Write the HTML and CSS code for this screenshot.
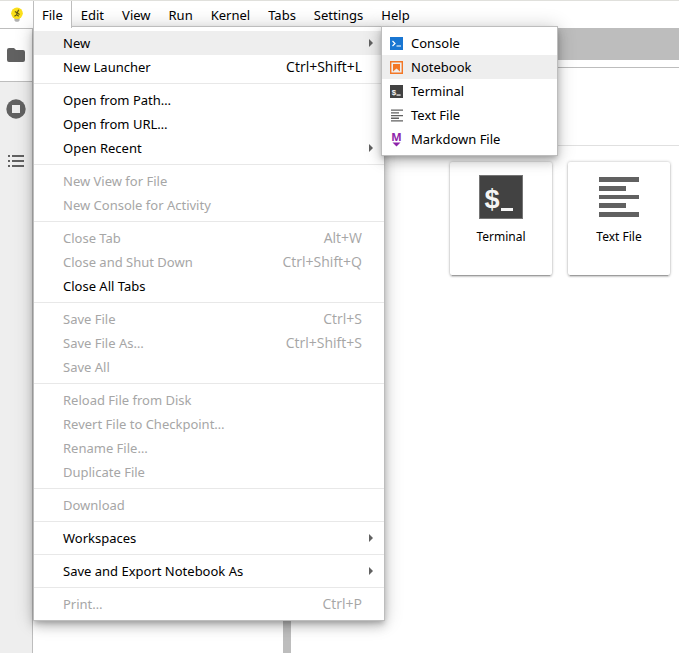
FILE: index.html
```html
<!DOCTYPE html>
<html lang="en">
<head>
    <meta charset="UTF-8">
    <meta name="viewport" content="width=device-width, initial-scale=1.0">
    <title>JupyterLab</title>
    <link rel="stylesheet" href="styles.css">
</head>
<body>
    <header class="top-panel">
        <div class="logo">
            <svg width="12" height="16" viewBox="0 0 14 18">
                <path d="M4 12h6v3.500L8.500 17h-3L4 15.500z" fill="#b0b0b0"/>
                <circle cx="7" cy="7" r="6.800" fill="#fbdf1b"/>
                <path d="M9 2.800L7.200 6.500L4.500 5M7.200 6.500L10 8.500M7 6.500L6.500 9L4 10.500M6.500 8.500L9 10.500" fill="none" stroke="#5d5415" stroke-width="1.300"/>
            </svg>
        </div>
        <nav>
            <ul class="menu-bar">
                <li>
                    <button class="menu-title active" type="button">File</button>
                    <ul class="menu file-menu">
                        <li>
                            <button class="item hover" type="button">New<span class="arrow"></span></button>
                            <ul class="menu sub-menu">
                                <li><button class="item" type="button">
                                    <svg width="13" height="13" viewBox="0 0 13 13"><path fill="#1976d2" d="M0 0h13v13H0z"/><path d="M2.500 4L5 6.500L2.500 9M6.500 9H11" fill="none" stroke="#fff" stroke-width="1.200"/></svg>
                                    Console</button></li>
                                <li><button class="item hover" type="button">
                                    <svg width="13" height="13" viewBox="0 0 13 13"><path d="M.7.7h11.600v11.600H.7z" fill="none" stroke="#f37726" stroke-width="1.400"/><path fill="#f37726" d="M3 3h7v7.500L6.500 7.500L3 10.500z"/></svg>
                                    Notebook</button></li>
                                <li><button class="item" type="button">
                                    <svg width="13" height="13" viewBox="0 0 44 44"><path fill="#424242" d="M0 0h44v44H0z"/><text x="5" y="33" class="terminal-sign">$</text><path fill="#fff" d="M22 32h14v4H22z"/></svg>
                                    Terminal</button></li>
                                <li><button class="item" type="button">
                                    <svg width="13" height="13" viewBox="0 0 13 13"><path fill="#616161" d="M1 .5h12v1.300H1zM1 3.200h8v1.300H1zM1 5.900h12v1.300H1zM1 8.600h8v1.300H1zM1 11.300h12v1.300H1z"/></svg>
                                    Text File</button></li>
                                <li><button class="item" type="button">
                                    <svg width="13" height="17" viewBox="0 0 13 17"><text x="6.500" y="10" text-anchor="middle" class="markdown-sign">M</text><path fill="#8e24aa" d="M2.500 11.500h8l-4 4z"/></svg>
                                    Markdown File</button></li>
                            </ul>
                        </li>
                        <li><button class="item" type="button">New Launcher<kbd>Ctrl+Shift+L</kbd></button></li>
                        <li class="separator"></li>
                        <li><button class="item" type="button">Open from Path…</button></li>
                        <li><button class="item" type="button">Open from URL…</button></li>
                        <li><button class="item" type="button">Open Recent<span class="arrow"></span></button></li>
                        <li class="separator"></li>
                        <li><button class="item" type="button" disabled>New View for File</button></li>
                        <li><button class="item" type="button" disabled>New Console for Activity</button></li>
                        <li class="separator"></li>
                        <li><button class="item" type="button" disabled>Close Tab<kbd>Alt+W</kbd></button></li>
                        <li><button class="item" type="button" disabled>Close and Shut Down<kbd>Ctrl+Shift+Q</kbd></button></li>
                        <li><button class="item" type="button">Close All Tabs</button></li>
                        <li class="separator"></li>
                        <li><button class="item" type="button" disabled>Save File<kbd>Ctrl+S</kbd></button></li>
                        <li><button class="item" type="button" disabled>Save File As…<kbd>Ctrl+Shift+S</kbd></button></li>
                        <li><button class="item" type="button" disabled>Save All</button></li>
                        <li class="separator"></li>
                        <li><button class="item" type="button" disabled>Reload File from Disk</button></li>
                        <li><button class="item" type="button" disabled>Revert File to Checkpoint…</button></li>
                        <li><button class="item" type="button" disabled>Rename File…</button></li>
                        <li><button class="item" type="button" disabled>Duplicate File</button></li>
                        <li class="separator"></li>
                        <li><button class="item" type="button" disabled>Download</button></li>
                        <li class="separator"></li>
                        <li><button class="item" type="button">Workspaces<span class="arrow"></span></button></li>
                        <li class="separator"></li>
                        <li><button class="item" type="button">Save and Export Notebook As<span class="arrow"></span></button></li>
                        <li class="separator"></li>
                        <li><button class="item" type="button" disabled>Print…<kbd>Ctrl+P</kbd></button></li>
                    </ul>
                </li>
                <li><button class="menu-title" type="button">Edit</button></li>
                <li><button class="menu-title" type="button">View</button></li>
                <li><button class="menu-title" type="button">Run</button></li>
                <li><button class="menu-title" type="button">Kernel</button></li>
                <li><button class="menu-title" type="button">Tabs</button></li>
                <li><button class="menu-title" type="button">Settings</button></li>
                <li><button class="menu-title" type="button">Help</button></li>
            </ul>
        </nav>
    </header>

    <div class="workspace">
        <aside class="side-bar">
            <button class="side-tab current" type="button" aria-label="File Browser">
                <svg width="18" height="14" viewBox="0 0 18 14"><path fill="#616161" d="M2 0h5l2 2h7q2 0 2 2v8q0 2-2 2H2q-2 0-2-2V2q0-2 2-2z"/></svg>
            </button>
            <button class="side-tab" type="button" aria-label="Running Terminals and Kernels">
                <svg width="20" height="20" viewBox="0 0 20 20"><circle cx="10" cy="10" r="9.700" fill="#616161"/><path fill="#eee" d="M6 6h8v8H6z"/></svg>
            </button>
            <button class="side-tab" type="button" aria-label="Table of Contents">
                <svg width="16" height="13" viewBox="0 0 16 13"><path fill="#616161" d="M0 0h2v2H0zM4 0h12v2H4zM0 5h2v2H0zM4 5h12v2H4zM0 10h2v2H0zM4 10h12v2H4z"/></svg>
            </button>
        </aside>
        <section class="left-panel"></section>
        <main class="dock">
            <div class="tab-bar"></div>
            <div class="launcher">
                <div class="launcher-head"></div>
                <div class="cards">
                    <button class="card" type="button">
                        <svg width="44" height="44" viewBox="0 0 44 44"><path fill="#757575" d="M0 0h44v44H0z"/><path fill="#424242" d="M1 1h42v42H1z"/><text x="5" y="33" class="terminal-sign">$</text><path fill="#f5f5f5" d="M22 33h12v3H22z"/></svg>
                        Terminal
                    </button>
                    <button class="card" type="button">
                        <svg width="44" height="44" viewBox="0 0 44 44"><path fill="#616161" d="M2 2h40v5H2zM2 11h27v5H2zM2 20h40v4H2zM2 28h27v5H2zM2 37h40v5H2z"/></svg>
                        Text File
                    </button>
                </div>
            </div>
        </main>
    </div>
</body>
</html>
```

FILE: styles.css
```css
* {
    margin: 0;
    padding: 0;
    box-sizing: border-box;
}

body {
    display: flex;
    flex-direction: column;
    height: 100vh;
    overflow: hidden;
    background: #fff;
    color: #000;
    font-family: 'Noto Sans', 'Open Sans', sans-serif;
    font-size: 13px;
}

ul {
    list-style: none;
}

button {
    border: none;
    background: none;
    color: inherit;
    font: inherit;
}

svg {
    display: block;
    flex: none;
    overflow: visible;
}

/* Top panel */
.top-panel {
    display: flex;
    height: 28px;
    border-top: 1px solid #e0e0dc;
}

.logo {
    display: flex;
    align-items: center;
    justify-content: center;
    width: 33px;
}

.menu-bar {
    display: flex;
}

.menu-bar > li {
    position: relative;
}

.menu-title {
    height: 27px;
    padding: 0 8px;
    border: 1px solid transparent;
    border-width: 0 1px;
}

.menu-title.active {
    position: relative;
    z-index: 3;
    background: #fff;
    border-color: #bdbdbd;
}

/* Menus */
.menu {
    position: absolute;
    z-index: 2;
    padding: 4px 0;
    background: #fff;
    border: 1px solid #bdbdbd;
    box-shadow: 0 3px 5px -1px rgba(0, 0, 0, 0.2),
                0 6px 10px 0 rgba(0, 0, 0, 0.14),
                0 1px 18px 0 rgba(0, 0, 0, 0.2);
}

.file-menu {
    top: 25px;
    left: 0;
    width: 352px;
}

.sub-menu {
    top: -1px;
    left: 347px;
    width: 177px;
}

.item {
    display: flex;
    align-items: center;
    width: 100%;
    height: 24px;
    padding: 0 11px 0 29px;
    text-align: left;
    white-space: nowrap;
}

.item.hover {
    background: #eee;
}

.item:disabled {
    color: #a6a6a6;
}

.item kbd {
    margin-left: auto;
    padding-right: 11px;
    font: 14px/18px 'Open Sans', sans-serif;
}

.arrow {
    margin-left: auto;
    border: 4px solid transparent;
    border-left-color: #616161;
    border-right-width: 0;
}

.sub-menu .item {
    gap: 8px;
    padding: 0 8px;
}

.separator {
    height: 9px;
    padding-top: 4px;
}

.separator::before {
    content: '';
    display: block;
    height: 1px;
    background: #e8e8e8;
}

.terminal-sign {
    fill: #f5f5f5;
    font: bold 27px 'Liberation Mono', monospace;
}

.markdown-sign {
    fill: #8e24aa;
    font: bold 11px 'Open Sans', sans-serif;
}

/* Workspace */
.workspace {
    display: flex;
    flex: 1;
}

.side-bar {
    width: 33px;
    background: #eee;
    border-top: 1px solid #bdbdbd;
    border-right: 1px solid #bdbdbd;
}

.side-tab {
    display: flex;
    align-items: center;
    justify-content: center;
    width: 32px;
    height: 53px;
}

.side-tab.current {
    background: #fff;
    border-bottom: 1px solid #bdbdbd;
}

.left-panel {
    width: 250px;
}

.dock {
    display: flex;
    flex: 1;
    flex-direction: column;
    padding-left: 8px;
    background: #bdbdbd;
}

.tab-bar {
    height: 32px;
}

.launcher {
    flex: 1;
    padding-top: 7px;
    background: #fff;
}

.launcher-head {
    height: 79px;
    border-top: 1px solid #bdbdbd;
    border-bottom: 1px solid #e0e0e0;
}

.cards {
    display: flex;
    gap: 16px;
    padding: 16px 0 0 159px;
}

.card {
    display: flex;
    flex-direction: column;
    align-items: center;
    gap: 10px;
    width: 102px;
    height: 113px;
    padding-top: 13px;
    background: #fff;
    border-radius: 2px;
    box-shadow: 0 3px 1px -2px rgba(0, 0, 0, 0.2),
                0 2px 2px 0 rgba(0, 0, 0, 0.14),
                0 0 3px 0 rgba(0, 0, 0, 0.3);
    font-size: 12px;
    line-height: 16px;
}
```
